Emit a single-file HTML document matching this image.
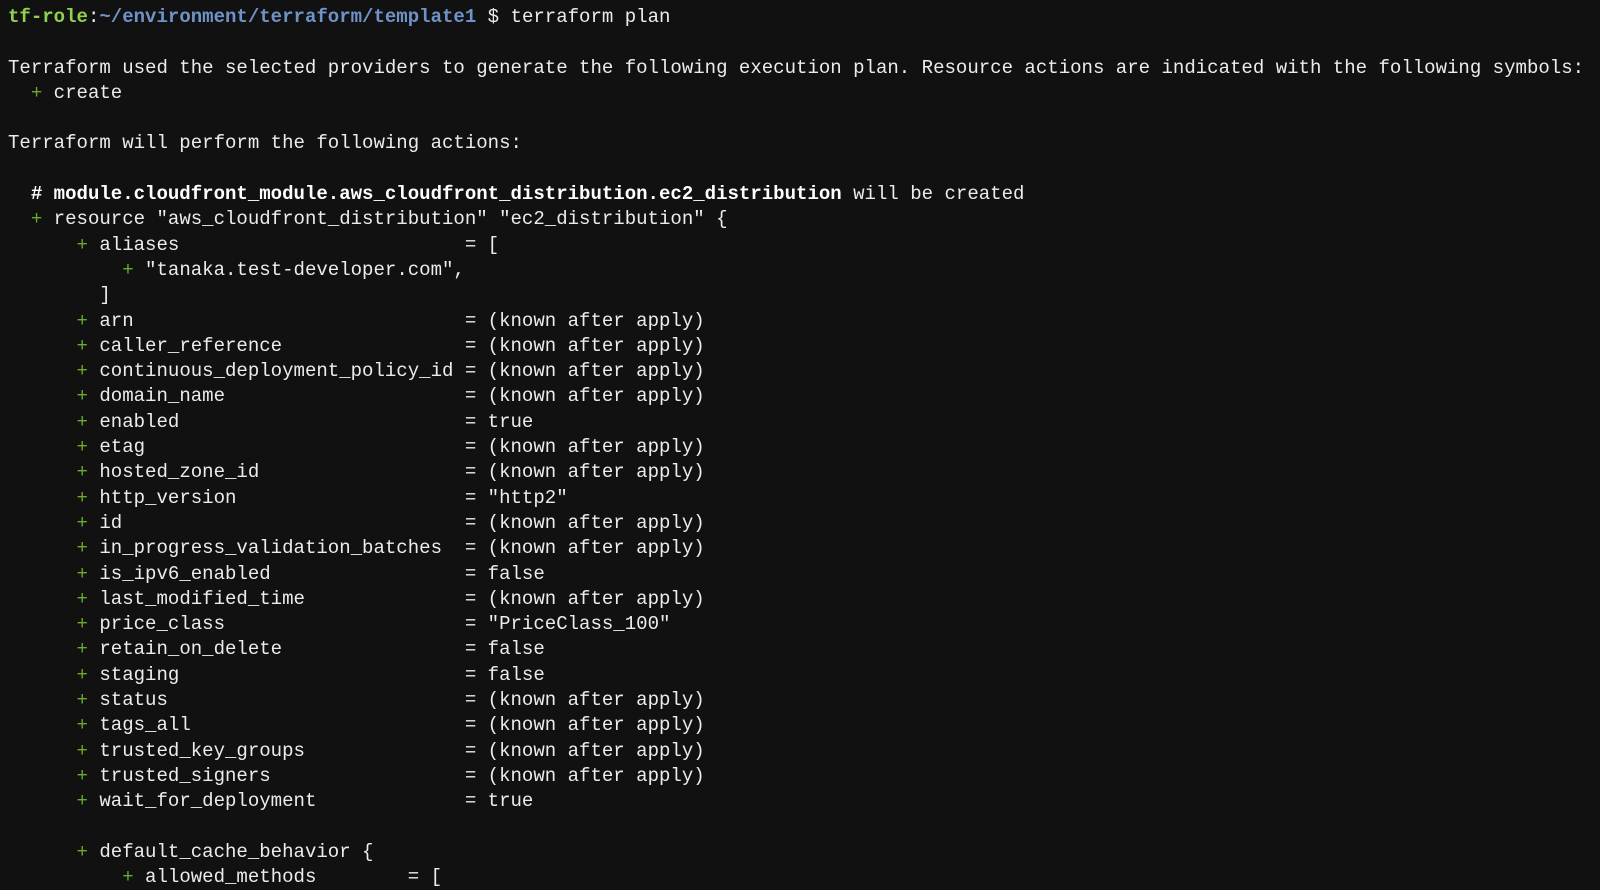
<!DOCTYPE html>
<html><head><meta charset="utf-8"><style>
html,body{margin:0;padding:0;background:#111111;width:1600px;height:877px;overflow:hidden}
pre{margin:0;position:absolute;left:8px;top:5px;font-family:"Liberation Mono","DejaVu Sans Mono",monospace;font-size:19.05px;line-height:25.3px;color:#ececec;white-space:pre}
.g{color:#6aab2e}.p{color:#8fd14f;font-weight:bold}.b{color:#6f93c6;font-weight:bold}.w{font-weight:bold;color:#fff}
</style></head><body><pre><span class="p">tf-role</span>:<span class="b">~/environment/terraform/template1</span> $ terraform plan

Terraform used the selected providers to generate the following execution plan. Resource actions are indicated with the following symbols:
  <span class="g">+</span> create

Terraform will perform the following actions:

  <span class="w"># module.cloudfront_module.aws_cloudfront_distribution.ec2_distribution</span> will be created
  <span class="g">+</span> resource "aws_cloudfront_distribution" "ec2_distribution" {
      <span class="g">+</span> aliases                         = [
          <span class="g">+</span> "tanaka.test-developer.com",
        ]
      <span class="g">+</span> arn                             = (known after apply)
      <span class="g">+</span> caller_reference                = (known after apply)
      <span class="g">+</span> continuous_deployment_policy_id = (known after apply)
      <span class="g">+</span> domain_name                     = (known after apply)
      <span class="g">+</span> enabled                         = true
      <span class="g">+</span> etag                            = (known after apply)
      <span class="g">+</span> hosted_zone_id                  = (known after apply)
      <span class="g">+</span> http_version                    = "http2"
      <span class="g">+</span> id                              = (known after apply)
      <span class="g">+</span> in_progress_validation_batches  = (known after apply)
      <span class="g">+</span> is_ipv6_enabled                 = false
      <span class="g">+</span> last_modified_time              = (known after apply)
      <span class="g">+</span> price_class                     = "PriceClass_100"
      <span class="g">+</span> retain_on_delete                = false
      <span class="g">+</span> staging                         = false
      <span class="g">+</span> status                          = (known after apply)
      <span class="g">+</span> tags_all                        = (known after apply)
      <span class="g">+</span> trusted_key_groups              = (known after apply)
      <span class="g">+</span> trusted_signers                 = (known after apply)
      <span class="g">+</span> wait_for_deployment             = true

      <span class="g">+</span> default_cache_behavior {
          <span class="g">+</span> allowed_methods        = [
</pre></body></html>
